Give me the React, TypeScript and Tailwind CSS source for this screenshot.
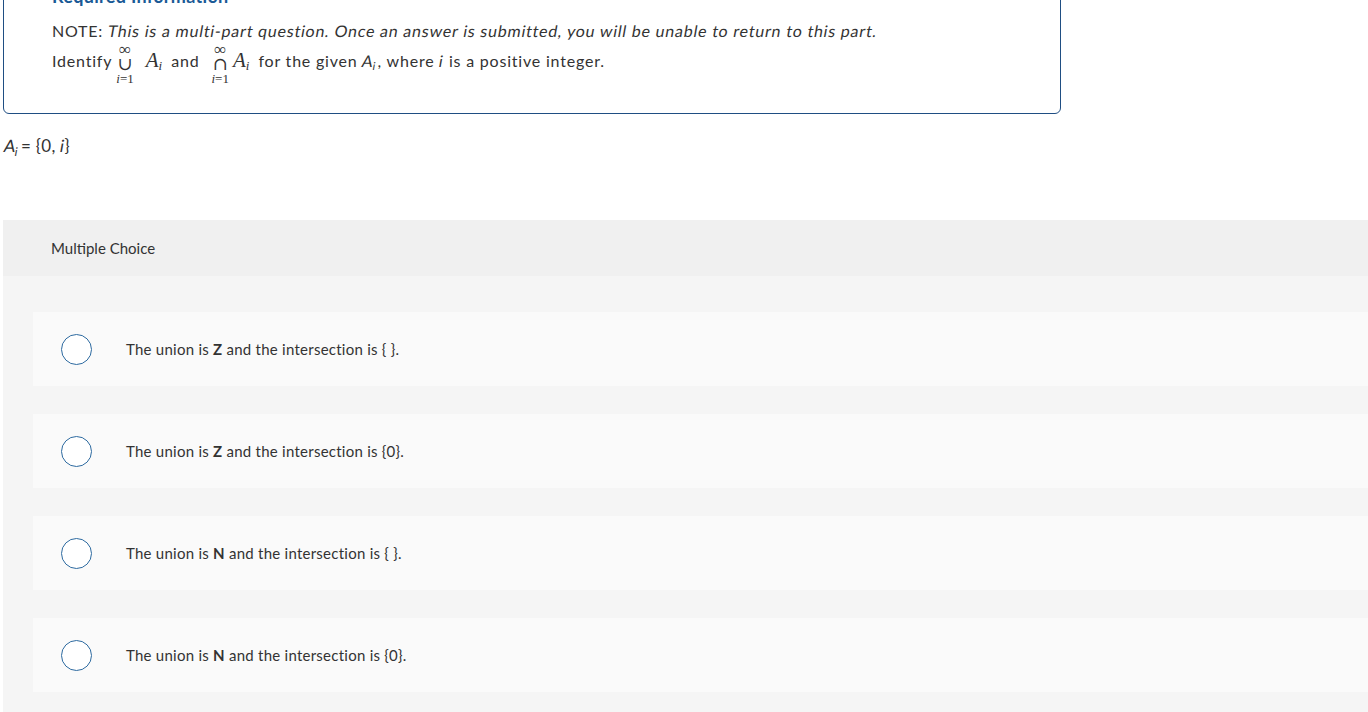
import React from "react";

const font = { fontFamily: "Lato, 'Open Sans', sans-serif" };

function BigOp({ sym }: { sym: string }) {
  return (
    <span className="inline-flex flex-col items-center leading-none tracking-normal" style={{ fontFamily: "'Liberation Serif', serif" }}>
      <span className="text-[17px] leading-[12px] text-[#333]">∞</span>
      <span className="text-[18px] leading-[16px] text-[#333]" style={{ fontFamily: "'DejaVu Serif', serif" }}>{sym}</span>
      <span className="text-[13px] leading-[14px] italic text-[#333]">
        i<span className="not-italic">=1</span>
      </span>
    </span>
  );
}

function Ai() {
  return (
    <span className="italic text-[21px] text-[#333] tracking-normal" style={{ fontFamily: "'Liberation Serif', serif" }}>
      A<sub className="text-[13px] align-baseline relative top-[3px]">i</sub>
    </span>
  );
}

const options = [
  ["Z", "{ }."],
  ["Z", "{0}."],
  ["N", "{ }."],
  ["N", "{0}."],
];

export default function App() {
  return (
    <div className="min-h-[712px] bg-white overflow-hidden text-[#333]" style={font}>
      <div className="ml-[3px] w-[1058px] -mt-[30px] border border-[#1f4e83] rounded-[6px] pl-[48px] pt-[13px] pb-[33px]">
        <h2 className="text-[18px] leading-[24px] font-bold text-[#1a5a96] tracking-[0.3px]">Required Information</h2>
        <p className="mt-[12px] text-[16px] leading-[22px] tracking-[0.78px]">
          NOTE: <span className="inline-block -skew-x-[10deg]">This is a multi-part question. Once an answer is submitted, you will be unable to return to this part.</span>
        </p>
        <div className="flex items-center h-[38px] text-[16px] tracking-[0.8px]">
          <span>Identify</span>
          <span className="ml-[4px]"><BigOp sym="∪" /></span>
          <span className="ml-[12px]"><Ai /></span>
          <span className="ml-[9px]">and</span>
          <span className="ml-[12px]"><BigOp sym="∩" /></span>
          <span className="ml-[4px]"><Ai /></span>
          <span className="ml-[9px]">
            for the given <span className="inline-block -skew-x-[10deg]">A<sub className="text-[11px] align-baseline relative top-[3px]">i</sub></span>, where <span className="inline-block -skew-x-[10deg]">i</span> is a positive integer.
          </span>
        </div>
      </div>

      <div className="mt-[20px] ml-[4px] h-[24px] flex items-center text-[17px] tracking-[0.3px]">
        <span className="inline-block -skew-x-[10deg]">A<sub className="text-[12px] align-baseline relative top-[4px]">i</sub></span>
        <span className="ml-[2px]">= {"{"}0, <span className="inline-block -skew-x-[10deg]">i</span>{"}"}</span>
      </div>

      <div className="mt-[62px] ml-[3px] bg-[#f5f5f5] pb-[40px]">
        <div className="h-[56px] bg-[#f0f0f0] flex items-center pl-[48px] text-[15px] text-[#333]">
          Multiple Choice
        </div>
        <div className="pt-[36px] pl-[30px] flex flex-col gap-[28px]">
          {options.map(([set, inter], i) => (
            <div key={i} className="h-[74px] bg-[#fafafa] flex items-center pl-[28px]">
              <span className="w-[31px] h-[31px] rounded-full border-[1.5px] border-[#2d6aa0] bg-white shrink-0" />
              <span className="ml-[34px] text-[15px] text-[#333] tracking-[0.25px]">
                The union is <b>{set}</b> and the intersection is {inter}
              </span>
            </div>
          ))}
        </div>
      </div>
    </div>
  );
}
